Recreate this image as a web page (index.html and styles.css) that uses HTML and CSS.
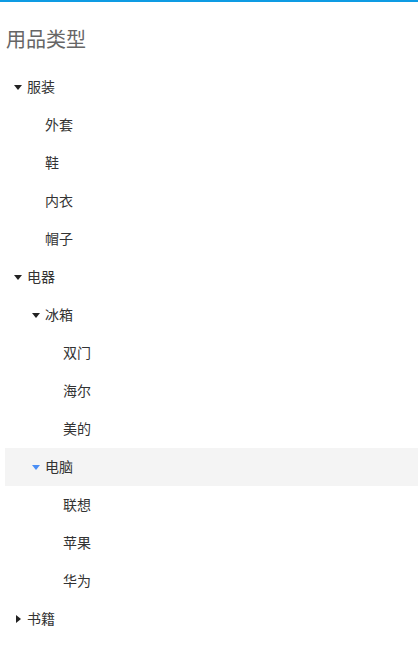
FILE: index.html
```html
<!DOCTYPE html>
<html lang="zh">
<head>
<meta charset="utf-8">
<title>用品类型</title>
<link rel="stylesheet" href="styles.css">
</head>
<body>
<div class="page">
  <h1 class="title">用品类型</h1>
  <ul class="tree">
    <li class="row lv0"><span class="caret open"></span><span class="label">服装</span></li>
    <li class="row lv1"><span class="caret none"></span><span class="label">外套</span></li>
    <li class="row lv1"><span class="caret none"></span><span class="label">鞋</span></li>
    <li class="row lv1"><span class="caret none"></span><span class="label">内衣</span></li>
    <li class="row lv1"><span class="caret none"></span><span class="label">帽子</span></li>
    <li class="row lv0"><span class="caret open"></span><span class="label">电器</span></li>
    <li class="row lv1"><span class="caret open"></span><span class="label">冰箱</span></li>
    <li class="row lv2"><span class="caret none"></span><span class="label">双门</span></li>
    <li class="row lv2"><span class="caret none"></span><span class="label">海尔</span></li>
    <li class="row lv2"><span class="caret none"></span><span class="label">美的</span></li>
    <li class="row lv1 active"><span class="caret open"></span><span class="label">电脑</span></li>
    <li class="row lv2"><span class="caret none"></span><span class="label">联想</span></li>
    <li class="row lv2"><span class="caret none"></span><span class="label">苹果</span></li>
    <li class="row lv2"><span class="caret none"></span><span class="label">华为</span></li>
    <li class="row lv0"><span class="caret closed"></span><span class="label">书籍</span></li>
  </ul>
</div>
</body>
</html>
```
FILE: styles.css
```css
html, body {
  margin: 0;
  padding: 0;
  background: #fff;
}
body {
  font-family: "Noto Sans CJK SC", "Noto Sans", sans-serif;
  color: #333;
}
.page {
  border-top: 2px solid #0e9be3;
  padding-top: 23px;
}
.title {
  margin: 0 0 15px 0;
  padding-left: 6px;
  font-size: 20px;
  line-height: 28px;
  font-weight: normal;
  color: #666;
}
.tree {
  list-style: none;
  margin: 0 0 0 5px;
  padding: 0;
}
.row {
  display: flex;
  align-items: center;
  height: 38px;
  font-size: 14px;
}
.row.lv1 { padding-left: 18px; }
.row.lv2 { padding-left: 36px; }
.row.active { background: #f4f4f4; }
.caret {
  width: 22px;
  height: 38px;
  flex: none;
  position: relative;
}
.caret.open::before {
  content: "";
  position: absolute;
  left: 9px;
  top: 17px;
  border-left: 4px solid transparent;
  border-right: 4px solid transparent;
  border-top: 5px solid #222;
}
.caret.closed::before {
  content: "";
  position: absolute;
  left: 11px;
  top: 15px;
  border-top: 4px solid transparent;
  border-bottom: 4px solid transparent;
  border-left: 5px solid #222;
}
.active .caret.open::before {
  border-top-color: #4a8ef5;
}
.label {
  line-height: 36px;
  padding-bottom: 2px;
  color: #333;
}
```
